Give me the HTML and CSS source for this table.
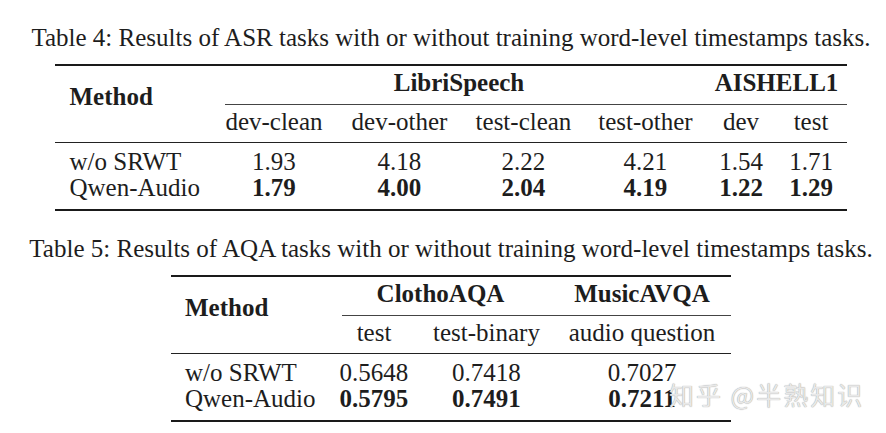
FILE: index.html
```html
<!DOCTYPE html>
<html lang="en">
<head>
<meta charset="utf-8">
<title>Tables 4 and 5</title>
<link rel="stylesheet" href="styles.css">
</head>
<body>
<div class="page">
  <div class="caption">Table 4: Results of ASR tasks with or without training word-level timestamps tasks.</div>
  <table class="tbl t4">
    <colgroup>
      <col class="w156"><col class="w125"><col class="w126"><col class="w122"><col class="w122"><col class="w69"><col class="w71">
    </colgroup>
    <thead>
      <tr class="hr1">
        <th class="method" rowspan="2">Method</th>
        <th class="group trim" colspan="4">LibriSpeech</th>
        <th class="group" colspan="2">AISHELL1</th>
      </tr>
      <tr class="hr2">
        <th>dev-clean</th><th>dev-other</th><th>test-clean</th><th>test-other</th><th>dev</th><th>test</th>
      </tr>
    </thead>
    <tbody>
      <tr class="r1">
        <td class="name">w/o SRWT</td><td>1.93</td><td>4.18</td><td>2.22</td><td>4.21</td><td>1.54</td><td>1.71</td>
      </tr>
      <tr class="r2">
        <td class="name">Qwen-Audio</td><td><b>1.79</b></td><td><b>4.00</b></td><td><b>2.04</b></td><td><b>4.19</b></td><td><b>1.22</b></td><td><b>1.29</b></td>
      </tr>
    </tbody>
  </table>

  <div class="caption cap2">Table 5: Results of AQA tasks with or without training word-level timestamps tasks.</div>
  <table class="tbl t5">
    <colgroup>
      <col class="w157"><col class="w92"><col class="w133"><col class="w178">
    </colgroup>
    <thead>
      <tr class="hr1">
        <th class="method" rowspan="2">Method</th>
        <th class="group trim" colspan="2">ClothoAQA</th>
        <th class="group">MusicAVQA</th>
      </tr>
      <tr class="hr2">
        <th>test</th><th>test-binary</th><th>audio question</th>
      </tr>
    </thead>
    <tbody>
      <tr class="r1">
        <td class="name">w/o SRWT</td><td>0.5648</td><td>0.7418</td><td>0.7027</td>
      </tr>
      <tr class="r2">
        <td class="name">Qwen-Audio</td><td><b>0.5795</b></td><td><b>0.7491</b></td><td><b>0.7211</b></td>
      </tr>
    </tbody>
  </table>

  <div class="watermark">知乎 @半熟知识</div>
</div>
</body>
</html>
```

FILE: styles.css
```css
html, body {
  margin: 0;
  padding: 0;
  background: #ffffff;
}

body {
  font-family: "Liberation Serif", "Times New Roman", serif;
  font-size: 25px;
  color: #1d1d1d;
}

.page {
  position: relative;
  width: 870px;
  height: 408px;
  padding: 25px 0 0 16px;
  display: flex;
  flex-direction: column;
  align-items: center;
}

.caption {
  line-height: 26px;
  white-space: nowrap;
}

.cap2 {
  margin-top: 25px;
}

.tbl {
  border-collapse: separate;
  border-spacing: 0;
  table-layout: fixed;
  margin-top: 13px;
  line-height: 26px;
}

.t4 { width: 791px; }
.t5 { width: 560px; }

.w156 { width: 156px; }
.w125 { width: 125px; }
.w126 { width: 126px; }
.w122 { width: 122px; }
.w69 { width: 69px; }
.w71 { width: 71px; }
.w157 { width: 157px; }
.w92 { width: 92px; }
.w133 { width: 133px; }
.w178 { width: 178px; }

.tbl th,
.tbl td {
  padding: 0 4px;
  text-align: center;
  white-space: nowrap;
  font-weight: normal;
}

.tbl b,
.tbl .group,
.tbl .method {
  font-weight: bold;
}

.tbl .method,
.tbl .name {
  text-align: left;
  padding-left: 14px;
}

.hr1 th {
  border-top: 2px solid #1a1a1a;
  padding-top: 4px;
  padding-bottom: 9px;
}

.tbl .method {
  vertical-align: top;
  padding-top: 18px;
  border-bottom: 1px solid #222222;
}

.group {
  background-image: linear-gradient(#444444, #444444);
  background-repeat: no-repeat;
  background-position: right bottom;
  background-size: 100% 1px;
}

.group.trim {
  background-size: calc(100% - 14px) 1px;
}

.hr2 th {
  padding-top: 4px;
  padding-bottom: 7px;
  border-bottom: 1px solid #222222;
}

.r1 td {
  padding-top: 6px;
}

.r2 td {
  padding-bottom: 8px;
  border-bottom: 2px solid #1a1a1a;
}

.watermark {
  position: absolute;
  left: 669px;
  top: 380px;
  font-family: "Noto Sans CJK SC", "Noto Sans", sans-serif;
  font-size: 25px;
  letter-spacing: 2px;
  line-height: 28px;
  color: #e8e8e8;
  text-shadow: 0 0 1px #8a8a8a;
  white-space: nowrap;
}
```
